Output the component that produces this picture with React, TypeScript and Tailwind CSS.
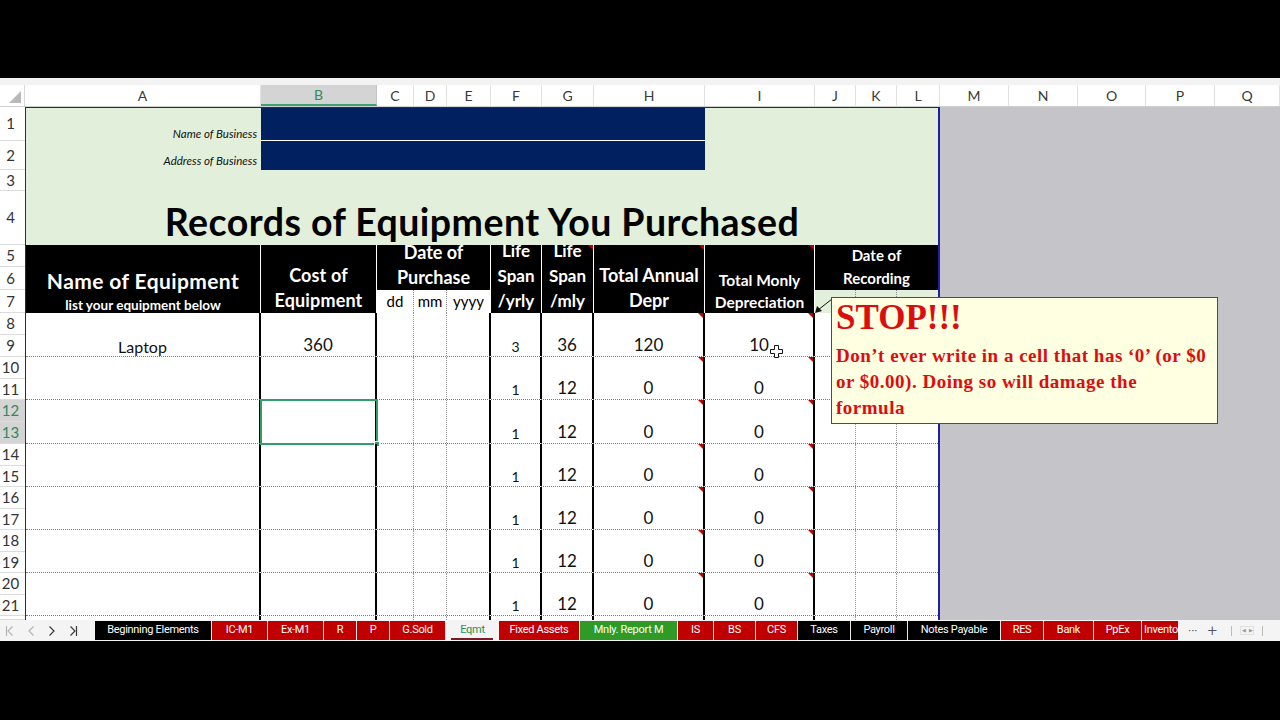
import React from 'react';

const SANS = '[font-family:Lato,sans-serif]';
const SERIF = '[font-family:Liberation_Serif,serif]';
const TABF = '[font-family:Roboto,sans-serif]';

type HeadCol = { l: string; w: string };

const headCols: HeadCol[] = [
  { l: 'A', w: 'w-[236px]' },
  { l: 'B', w: 'w-[116px]' },
  { l: 'C', w: 'w-[37px]' },
  { l: 'D', w: 'w-[33px]' },
  { l: 'E', w: 'w-[44px]' },
  { l: 'F', w: 'w-[51px]' },
  { l: 'G', w: 'w-[52px]' },
  { l: 'H', w: 'w-[111px]' },
  { l: 'I', w: 'w-[110px]' },
  { l: 'J', w: 'w-[41px]' },
  { l: 'K', w: 'w-[41px]' },
  { l: 'L', w: 'w-[43px]' },
  { l: 'M', w: 'w-[69px]' },
  { l: 'N', w: 'w-[69px]' },
  { l: 'O', w: 'w-[68px]' },
  { l: 'P', w: 'w-[69px]' },
  { l: 'Q', w: 'w-[65px]' },
];

const rowNums: [string, string][] = [
  ['1', 'h-[34px]'], ['2', 'h-[29px]'], ['3', 'h-[21px]'], ['4', 'h-[54px]'],
  ['5', 'h-[22px]'], ['6', 'h-[23px]'], ['7', 'h-[23px]'],
  ['8', 'h-[22px]'], ['9', 'h-[22px]'], ['10', 'h-[22px]'], ['11', 'h-[21px]'],
  ['12', 'h-[22px]'], ['13', 'h-[22px]'], ['14', 'h-[22px]'], ['15', 'h-[21px]'],
  ['16', 'h-[22px]'], ['17', 'h-[21px]'], ['18', 'h-[22px]'], ['19', 'h-[21px]'],
  ['20', 'h-[22px]'], ['21', 'h-[21px]'], ['', 'h-[4px]'],
];

type PairData = { h: string; a?: string; b?: string; f: string; g: string; hv: string; iv: string; sel?: boolean };

const pairs: PairData[] = [
  { h: 'h-[44px]', a: 'Laptop', b: '360', f: '3', g: '36', hv: '120', iv: '10' },
  { h: 'h-[43px]', f: '1', g: '12', hv: '0', iv: '0' },
  { h: 'h-[44px]', f: '1', g: '12', hv: '0', iv: '0', sel: true },
  { h: 'h-[43px]', f: '1', g: '12', hv: '0', iv: '0' },
  { h: 'h-[43px]', f: '1', g: '12', hv: '0', iv: '0' },
  { h: 'h-[43px]', f: '1', g: '12', hv: '0', iv: '0' },
  { h: 'h-[43px]', f: '1', g: '12', hv: '0', iv: '0' },
];

const tabs = [
  { t: 'Beginning Elements', w: 'w-[117px]', bg: 'bg-black' },
  { t: 'IC-M1', w: 'w-[56px]', bg: 'bg-[#c00000]' },
  { t: 'Ex-M1', w: 'w-[56px]', bg: 'bg-[#c00000]' },
  { t: 'R', w: 'w-[33px]', bg: 'bg-[#c00000]' },
  { t: 'P', w: 'w-[33px]', bg: 'bg-[#c00000]' },
  { t: 'G.Sold', w: 'w-[56px]', bg: 'bg-[#c00000]' },
  { t: 'Eqmt', w: 'w-[53px]', bg: '', active: true },
  { t: 'Fixed Assets', w: 'w-[81px]', bg: 'bg-[#c00000]' },
  { t: 'Mnly. Report M', w: 'w-[98px]', bg: 'bg-[#2f9a26]' },
  { t: 'IS', w: 'w-[36px]', bg: 'bg-[#c00000]' },
  { t: 'BS', w: 'w-[42px]', bg: 'bg-[#c00000]' },
  { t: 'CFS', w: 'w-[42px]', bg: 'bg-[#c00000]' },
  { t: 'Taxes', w: 'w-[53px]', bg: 'bg-black' },
  { t: 'Payroll', w: 'w-[57px]', bg: 'bg-black' },
  { t: 'Notes Payable', w: 'w-[93px]', bg: 'bg-black' },
  { t: 'RES', w: 'w-[43px]', bg: 'bg-[#c00000]' },
  { t: 'Bank', w: 'w-[50px]', bg: 'bg-[#c00000]' },
  { t: 'PpEx', w: 'w-[48px]', bg: 'bg-[#c00000]' },
];

const RedTick = () => (
  <div className="absolute right-0 top-0 w-0 h-0 border-l-[5px] border-l-transparent border-t-[5px] border-t-[#c00000]" />
);

const ColumnHeader = () => (
  <div className={`flex h-[22px] bg-white border-b border-[#d0d0d0] text-[14px] text-[#3a3a3a] ${SANS}`}>
    <div className="relative w-[25px] border-r border-[#d9d9d9]">
      <div className="absolute right-[3px] bottom-[3px] w-0 h-0 border-l-[12px] border-l-transparent border-b-[12px] border-b-[#b9b9b9]" />
    </div>
    {headCols.map((c) =>
      c.l === 'B' ? (
        <div key={c.l} className={`${c.w} flex items-center justify-center bg-[#d4d4d4] text-[#2e8b5c] border-r border-[#c4c4c4] border-b-2 border-b-[#3aa371]`}>
          {c.l}
        </div>
      ) : (
        <div key={c.l} className={`${c.w} flex items-center justify-center border-r border-[#e2e2e2]`}>
          {c.l}
        </div>
      )
    )}
  </div>
);

const RowHeader = () => (
  <div className={`w-[25px] flex flex-col bg-white text-[15px] text-[#333] ${SANS}`}>
    {rowNums.map(([n, h], i) => (
      <div
        key={i}
        className={`${h} flex items-center justify-center pr-[4px] border-b border-[#dcdcdc] ${
          n === '12' || n === '13' ? 'bg-[#d4d4d4] text-[#2e8b5c]' : ''
        }`}
      >
        {n}
      </div>
    ))}
  </div>
);

const TopBlock = () => (
  <div className={`flex flex-col bg-[#e2efda] border-t border-[#1f1fa3] ${SANS}`}>
    <div className="flex h-[33px]">
      <div className="w-[235px] flex items-end justify-end pr-[4px] text-[11.5px] leading-[14px] italic text-[#111]">Name of Business</div>
      <div className="w-[444px] bg-[#002060] border-b border-white" />
    </div>
    <div className="flex h-[29px]">
      <div className="w-[235px] flex items-end justify-end pr-[4px] pb-[2px] text-[11.5px] leading-[14px] italic text-[#111]">Address of Business</div>
      <div className="w-[444px] bg-[#002060]" />
    </div>
    <div className="h-[21px]" />
    <div className="h-[54px] flex items-end justify-center pb-[1px]">
      <div className="text-[37.5px] leading-[45px] font-bold text-black tracking-[0.45px] whitespace-nowrap">Records of Equipment You Purchased</div>
    </div>
  </div>
);

const HeaderBlock = () => (
  <div className={`flex h-[68px] bg-black text-white font-bold ${SANS}`}>
    <div className="w-[235px] flex flex-col items-center justify-end border-r border-white">
      <div className="text-[21px] leading-[24px] mb-[4px] tracking-[0.4px] whitespace-nowrap">Name of Equipment</div>
      <div className="text-[13.5px] leading-[16px] whitespace-nowrap">list your equipment below</div>
    </div>
    <div className="w-[116px] flex flex-col items-center justify-end border-r border-white text-[18px] leading-[25px] tracking-[0.15px]">
      <div>Cost of</div>
      <div>Equipment</div>
    </div>
    <div className="w-[114px] flex flex-col border-r border-white">
      <div className="h-[45px] flex flex-col items-center justify-end text-[18px] leading-[25px]">
        <div>Date of</div>
        <div>Purchase</div>
      </div>
      <div className="h-[23px] flex bg-white text-black font-normal text-[15px]">
        <div className="w-[37px] flex items-center justify-center border-r border-dotted border-[#8a8a8a]">dd</div>
        <div className="w-[33px] flex items-center justify-center border-r border-dotted border-[#8a8a8a]">mm</div>
        <div className="w-[43px] flex items-center justify-center">yyyy</div>
      </div>
    </div>
    <div className="w-[51px] flex flex-col items-center justify-end overflow-hidden border-r border-white text-[17px] leading-[25px]">
      <div>Life</div>
      <div>Span</div>
      <div>/yrly</div>
    </div>
    <div className="relative w-[52px] flex flex-col items-center justify-end overflow-hidden border-r border-white text-[17px] leading-[25px]">
      <div>Life</div>
      <div>Span</div>
      <div>/mly</div>
      <RedTick />
    </div>
    <div className="relative w-[111px] flex flex-col items-center justify-end border-r border-white text-[18px] leading-[25px] whitespace-nowrap">
      <div>Total Annual</div>
      <div>Depr</div>
      <RedTick />
    </div>
    <div className="relative w-[110px] flex flex-col items-center justify-end border-r border-white text-[15.5px] leading-[22px] whitespace-nowrap">
      <div>Total Monly</div>
      <div>Depreciation</div>
      <RedTick />
    </div>
    <div className="w-[123px] flex flex-col">
      <div className="h-[45px] flex flex-col items-center justify-end text-[15px] leading-[23px]">
        <div>Date of</div>
        <div>Recording</div>
      </div>
      <div className="h-[23px] flex bg-[#e2efda]">
        <div className="w-[41px] border-r border-dotted border-[#8a8a8a]" />
        <div className="w-[41px] border-r border-dotted border-[#8a8a8a]" />
        <div className="w-[41px]" />
      </div>
    </div>
  </div>
);

const Pair = ({ d }: { d: PairData }) => (
  <div className={`${d.h} flex flex-col ${SANS} text-[#111]`}>
    <div className="flex flex-1">
      <div className="w-[235px] flex items-end justify-center border-r-2 border-black text-[16px] leading-[18px]">{d.a}</div>
      <div className="relative w-[116px] flex items-end justify-center border-r-2 border-black text-[17px] leading-[22px]">
        {d.b}
        {d.sel && (
          <div className="absolute left-[-1px] top-[-1px] right-[-3px] bottom-[-2px] border-2 border-[#2f9e68]">
            <div className="absolute right-[-4px] bottom-[-4px] w-[6px] h-[6px] bg-[#2f9e68] border border-white" />
          </div>
        )}
      </div>
      <div className="w-[37px] border-r border-dotted border-[#9a9a9a]" />
      <div className="w-[33px] border-r border-dotted border-[#9a9a9a]" />
      <div className="w-[44px] border-r-2 border-black" />
      <div className="w-[51px] flex items-end justify-center border-r-2 border-black text-[14px] leading-[18px]">{d.f}</div>
      <div className="w-[52px] flex items-end justify-center border-r-2 border-black text-[17px] leading-[22px]">{d.g}</div>
      <div className="relative w-[111px] flex items-end justify-center border-r-2 border-black text-[17px] leading-[22px]">
        {d.hv}
        <RedTick />
      </div>
      <div className="relative w-[110px] flex items-end justify-center border-r-2 border-black text-[17px] leading-[22px]">
        {d.iv}
        <RedTick />
      </div>
      <div className="w-[41px] border-r border-dotted border-[#9a9a9a]" />
      <div className="w-[41px] border-r border-dotted border-[#9a9a9a]" />
      <div className="w-[41px]" />
    </div>
    <div className="h-px border-t border-dotted border-[#7a7a7a]" />
  </div>
);

const Sliver = () => (
  <div className="flex h-[4px]">
    <div className="w-[235px] border-r-2 border-black" />
    <div className="w-[116px] border-r-2 border-black" />
    <div className="w-[37px] border-r border-dotted border-[#9a9a9a]" />
    <div className="w-[33px] border-r border-dotted border-[#9a9a9a]" />
    <div className="w-[44px] border-r-2 border-black" />
    <div className="w-[51px] border-r-2 border-black" />
    <div className="w-[52px] border-r-2 border-black" />
    <div className="w-[111px] border-r-2 border-black" />
    <div className="w-[110px] border-r-2 border-black" />
    <div className="w-[41px] border-r border-dotted border-[#9a9a9a]" />
    <div className="w-[41px] border-r border-dotted border-[#9a9a9a]" />
    <div className="w-[41px]" />
  </div>
);

const Chevron = ({ dir, bar, color }: { dir: 'l' | 'r'; bar?: boolean; color: string }) => (
  <svg width="14" height="14" viewBox="0 0 14 14" fill="none" stroke={color} strokeWidth="1.2">
    {dir === 'l' ? (
      <>
        <path d="M9.5 2.5 L5 7 L9.5 11.5" />
        {bar && <path d="M3.5 2 V12" />}
      </>
    ) : (
      <>
        <path d="M4.5 2.5 L9 7 L4.5 11.5" />
        {bar && <path d="M10.5 2 V12" />}
      </>
    )}
  </svg>
);

const TabBar = () => (
  <div className={`flex h-[21px] bg-[#f4f4f4] ${TABF}`}>
    <div className="w-[95px] flex items-center pl-[3px] gap-[7px]">
      <Chevron dir="l" bar color="#b5b5b5" />
      <Chevron dir="l" color="#b5b5b5" />
      <Chevron dir="r" color="#3a3a3a" />
      <Chevron dir="r" bar color="#3a3a3a" />
    </div>
    {tabs.map((t) =>
      t.active ? (
        <div key={t.t} className={`${t.w} relative mt-[1px] h-[19px] flex items-center justify-center text-[11px] tracking-[-0.3px] text-[#1f9157]`}>
          {t.t}
          <div className="absolute left-[5px] right-[6px] bottom-0 h-[2px] bg-[#7c1b27]" />
        </div>
      ) : (
        <div key={t.t} className={`${t.w} ${t.bg} mt-[1px] h-[19px] flex items-center justify-center border-r border-[#e6e6e6] text-[11px] tracking-[-0.3px] text-white whitespace-nowrap`}>
          {t.t}
        </div>
      )
    )}
    <div className="w-[36px] mt-[1px] h-[19px] flex items-center pl-[2px] overflow-hidden bg-[#c00000] text-[11px] tracking-[-0.3px] text-white whitespace-nowrap">Inventory</div>
    <div className="flex items-center pl-[10px] gap-[10px] text-[#555]">
      <span className="text-[12px] leading-none">···</span>
      <span className="text-[17px] leading-none font-light">+</span>
    </div>
    <div className="flex items-center ml-[14px] gap-[8px]">
      <div className="w-px h-[10px] bg-[#bbb]" />
      <div className="w-[14px] h-[9px] flex items-center justify-center gap-[3px] text-[5px] text-[#999] border border-[#e0e0e0]">
        <span>◀</span>
        <span>▶</span>
      </div>
      <div className="w-px h-[10px] bg-[#bbb]" />
    </div>
  </div>
);

const Comment = () => (
  <>
    <svg className="absolute left-[812px] top-[295px]" width="22" height="20" viewBox="0 0 22 20">
      <path d="M20 4 L6 15" stroke="#111" strokeWidth="1" />
      <path d="M3 18 L5 11 L10 16 Z" fill="#111" />
    </svg>
    <div className={`absolute left-[831px] top-[297px] w-[387px] h-[127px] bg-[#ffffe1] border border-[#4d4d4d] px-[4px] text-[#dc0d0d] font-bold ${SERIF}`}>
      <div className="mt-[1px] text-[35px] leading-[38px]">STOP!!!</div>
      <div className="mt-[6px] text-[19px] leading-[26px] tracking-[0.5px] whitespace-nowrap">
        <div>Don’t ever write in a cell that has ‘0’ (or $0</div>
        <div>or $0.00). Doing so will damage the</div>
        <div>formula</div>
      </div>
    </div>
  </>
);

const MoveCursor = () => (
  <svg className="absolute left-[770px] top-[345px]" width="13" height="13" viewBox="0 0 13 13">
    <path d="M4.5 0.5 H8.5 V4.5 H12.5 V8.5 H8.5 V12.5 H4.5 V8.5 H0.5 V4.5 H4.5 Z" fill="#fff" stroke="#111" strokeWidth="1" />
  </svg>
);

export default function App() {
  return (
    <div className="relative w-[1280px] h-[720px] overflow-hidden bg-black flex flex-col">
      <div className="h-[78px] bg-black" />
      <div className="h-[7px] bg-[#f3f3f3]" />
      <ColumnHeader />
      <div className="flex h-[513px]">
        <RowHeader />
        <div className="w-[915px] flex flex-col bg-white border-l border-r-2 border-[#1f1fa3] overflow-hidden">
          <TopBlock />
          <HeaderBlock />
          {pairs.map((p, i) => (
            <Pair key={i} d={p} />
          ))}
          <Sliver />
        </div>
        <div className="flex-1 bg-[#c5c4c9]" />
      </div>
      <TabBar />
      <div className="flex-1 bg-black" />
      <Comment />
      <MoveCursor />
    </div>
  );
}
